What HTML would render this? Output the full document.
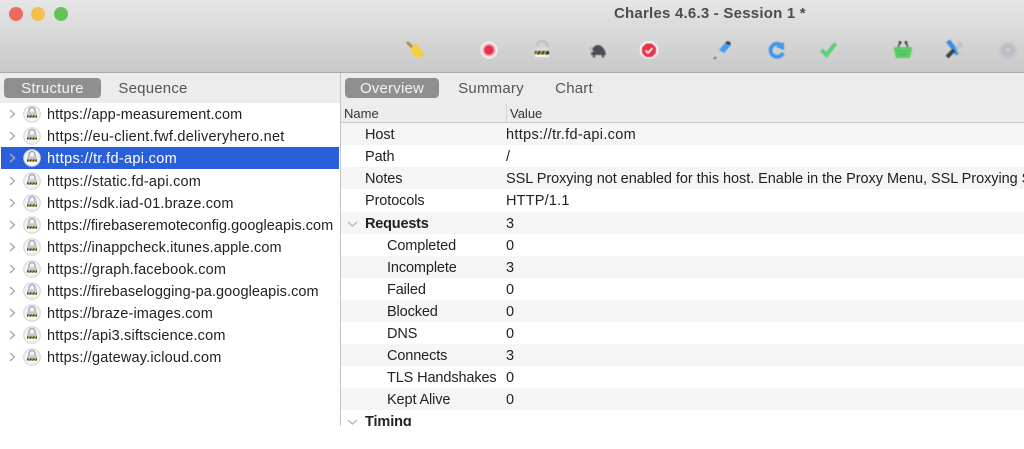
<!DOCTYPE html>
<html><head><meta charset="utf-8">
<style>
html,body{margin:0;padding:0;background:#fff}
body{width:1024px;height:449px;overflow:hidden;position:relative;font-family:"Liberation Sans",sans-serif;font-size:14.5px;color:#222}
.a{position:absolute;white-space:nowrap}
#bar{left:0;top:0;width:1024px;height:72px;background:linear-gradient(#e6e6e6,#c9c9c9)}
#sep{left:0;top:72px;width:1024px;height:1px;background:#aaa}
#tabs{left:0;top:73px;width:1024px;height:30px;background:#ececec}
.dot{width:14px;height:14px;border-radius:50%;top:7px}
.tab{height:20px;line-height:21px;top:78px;text-align:center;border-radius:4px;color:#555;font-size:15px;letter-spacing:.2px}
.tab.on{background:#8f8f8f;color:#f4f4f4}
#title{left:614px;top:5px;font-size:15px;font-weight:bold;color:#4d4d4d;letter-spacing:.22px}
.r{left:47px;height:22px;line-height:24px;color:#222}
#sel{left:1px;top:147px;width:338px;height:22px;background:#2a5fdc}
#div{left:340px;top:73px;width:1px;height:353px;background:#c4c4c4}
#right{left:341px;top:103px;width:683px;height:323px;overflow:hidden;background:#fff}
#head{left:0;top:0;width:683px;height:19px;background:#ececec;border-bottom:1px solid #c9c9c9;line-height:21px;font-size:13px;color:#333}
.row{left:0;width:683px;height:22px;line-height:24px;letter-spacing:0}
.g{background:#f5f5f5}
.row span{position:absolute;top:0}
.n{left:24px;letter-spacing:-.1px}.s{left:46px;letter-spacing:-.12px}.v{left:165px}
</style></head><body>
<div class="a" id="bar"></div><div class="a" id="sep"></div><div class="a" id="tabs"></div>
<div class="a dot" style="left:9px;background:#ec6a5f"></div>
<div class="a dot" style="left:31px;background:#f4bf4f"></div>
<div class="a dot" style="left:54px;background:#61c454"></div>
<div class="a" id="title">Charles 4.6.3 - Session 1 *</div>

<svg class="a" style="left:400px;top:35px;filter:blur(.4px)" width="624" height="30" viewBox="400 35 624 30">
<path d="M407 42l7 7" stroke="#a9853f" stroke-width="2.600"/>
<path d="M410.500 48.500l5.500-5.500 4 5.500 4.500 4.500-6 5.500-5.500-3z" fill="#f5cf3c"/>
<circle cx="489" cy="50" r="8.500" fill="#f5f0f1"/><circle cx="489" cy="50" r="6.500" fill="#f5a8b5"/><circle cx="489" cy="50" r="4.800" fill="#e92f4a"/>
<path d="M537 49v-3a5 5 0 0 1 10 0v3" fill="none" stroke="#bcc0cc" stroke-width="2.400"/>
<rect x="536" y="47" width="12" height="4" fill="#dcdce0"/>
<rect x="535" y="51" width="14" height="3.500" fill="#2b281d"/>
<path d="M536 54.500l2-3.500M540 54.500l2-3.500M544 54.500l2-3.500" stroke="#e2c33a" stroke-width="1.400"/>
<rect x="535" y="54.500" width="14" height="2.500" fill="#f7f7f7"/>
<path d="M591 55c0-7 4-10 7-10s7 3 8 10z" fill="#4b4d52"/>
<circle cx="588" cy="45.500" r="2" fill="#d8d8da"/><path d="M589 47l4 5" stroke="#bcbcc0" stroke-width="2.200"/>
<path d="M594 55v2.500M603 55v2.500" stroke="#555" stroke-width="2.400"/>
<path d="M645 41.500h8l5 5v7l-5 5h-8l-5-5v-7z" fill="#f7f7f7"/>
<path d="M646 43.500h6l4 4v5.500l-4 4h-6l-4-4v-5.500z" fill="#e8304a"/>
<path d="M645.500 50.500l2.500 2.500 4.500-5" fill="none" stroke="#fff" stroke-width="1.800"/>
<path d="M716 57l5-7" stroke="#cdd3dc" stroke-width="2.800"/>
<path d="M714 59l2-2" stroke="#555" stroke-width="1.500"/>
<path d="M719 50l7-8 5 3-7 8z" fill="#4a9bf0"/>
<path d="M725 43l3-2 3 2-1 2z" fill="#333"/>
<path d="M782 46a6.500 6.500 0 1 0 1 7" fill="none" stroke="#3f95ee" stroke-width="3.800"/>
<path d="M776 47l8-5v8z" fill="#3f95ee"/>
<path d="M821.500 50l5 5 9-11.500" fill="none" stroke="#56d072" stroke-width="4"/>
<path d="M898 47l2-4M908 47l-2-4" stroke="#555" stroke-width="1.600"/>
<circle cx="900" cy="42.500" r="1.500" fill="#444"/><circle cx="906" cy="42.500" r="1.500" fill="#444"/>
<path d="M894 47h18v3l-2 8h-14l-2-8z" fill="#5ccf68"/>
<path d="M897 51h12M898 54h10" stroke="#46b556" stroke-width="1"/>
<path d="M946 42l4-2.500 10 13-4 3z" fill="#3a8fec"/>
<path d="M962 43l-6 6" stroke="#b8bec8" stroke-width="2.600"/><path d="M960 41a3.500 3.500 0 0 0 4 6" fill="none" stroke="#c5cad2" stroke-width="2"/>
<path d="M954 50l-7 7" stroke="#3d4248" stroke-width="4"/>
<path d="M957 50l6 6.500" stroke="#c5cad2" stroke-width="2.400"/>
<circle cx="1008" cy="50" r="6.500" fill="#b9bdc6"/>
<circle cx="1008" cy="50" r="2" fill="#cdcfd4"/>
<circle cx="1008" cy="50" r="8" fill="none" stroke="#bdc0c8" stroke-width="2" stroke-dasharray="2 1.500"/>
</svg>

<div class="a tab on" style="left:4px;width:97px">Structure</div>
<div class="a tab" style="left:110px;width:86px">Sequence</div>
<div class="a tab on" style="left:345px;width:94px">Overview</div>
<div class="a tab" style="left:450px;width:82px">Summary</div>
<div class="a tab" style="left:548px;width:52px">Chart</div>

<div class="a" id="sel"></div>
<div class="a" id="div"></div>

<div class="a r" style="top:103px;letter-spacing:.1px">https://app-measurement.com</div>
<div class="a r" style="top:125px;letter-spacing:.25px">https://eu-client.fwf.deliveryhero.net</div>
<div class="a r" style="top:147px;color:#fff;letter-spacing:.32px">https://tr.fd-api.com</div>
<div class="a r" style="top:170px;letter-spacing:.2px">https://static.fd-api.com</div>
<div class="a r" style="top:192px;letter-spacing:.16px">https://sdk.iad-01.braze.com</div>
<div class="a r" style="top:214px;letter-spacing:.04px">https://firebaseremoteconfig.googleapis.com</div>
<div class="a r" style="top:236px;letter-spacing:.12px">https://inappcheck.itunes.apple.com</div>
<div class="a r" style="top:258px;letter-spacing:.16px">https://graph.facebook.com</div>
<div class="a r" style="top:280px;letter-spacing:.08px">https://firebaselogging-pa.googleapis.com</div>
<div class="a r" style="top:302px;letter-spacing:.13px">https://braze-images.com</div>
<div class="a r" style="top:324px;letter-spacing:.16px">https://api3.siftscience.com</div>
<div class="a r" style="top:346px;letter-spacing:.18px">https://gateway.icloud.com</div>

<svg class="a" style="left:0;top:103px;filter:blur(.3px)" width="46" height="266" viewBox="0 0 46 266">
<defs>
<g id="i"><path d="M10 7l4.500 4-4.500 4" fill="none" stroke="#aaa" stroke-width="1.400"/>
<circle cx="32" cy="11" r="8.300" fill="#f3f3f5" stroke="#d4d4d4" stroke-width="1"/>
<path d="M29 10v-2.500a3 3 0 0 1 6 0v2.500" fill="none" stroke="#a6aab4" stroke-width="1.500"/>
<rect x="27" y="9.500" width="10" height="3" fill="#c6c6ca"/>
<rect x="27" y="12.500" width="10" height="2.200" fill="#3b3720"/>
<path d="M28.500 14.700l1-2.200M31.500 14.700l1-2.200M34.500 14.700l1-2.200" stroke="#e0c030" stroke-width="1"/>
<rect x="27" y="14.700" width="10" height="1.300" fill="#fafafa"/></g>
</defs>
<use href="#i" y="0"/><use href="#i" y="22"/><use href="#i" y="44"/><use href="#i" y="67"/><use href="#i" y="89"/><use href="#i" y="111"/><use href="#i" y="133"/><use href="#i" y="155"/><use href="#i" y="177"/><use href="#i" y="199"/><use href="#i" y="221"/><use href="#i" y="243"/>
</svg>

<div class="a" id="right">
<div class="a" id="head"><span class="a" style="left:3px">Name</span><span class="a" style="left:165px;top:0;width:1px;height:19px;background:#d5d5d5"></span><span class="a" style="left:169px">Value</span></div>
<div class="a row g" style="top:20px"><span class="n">Host</span><span class="v" style="letter-spacing:.32px">https://tr.fd-api.com</span></div>
<div class="a row" style="top:42px"><span class="n">Path</span><span class="v">/</span></div>
<div class="a row g" style="top:64px"><span class="n">Notes</span><span class="v" style="letter-spacing:-.05px">SSL Proxying not enabled for this host. Enable in the Proxy Menu, SSL Proxying Settings.</span></div>
<div class="a row" style="top:86px"><span class="n">Protocols</span><span class="v" style="letter-spacing:.2px">HTTP/1.1</span></div>
<div class="a row g" style="top:109px"><span class="n" style="letter-spacing:-.2px"><b>Requests</b></span><span class="v">3</span></div>
<div class="a row" style="top:131px"><span class="s">Completed</span><span class="v">0</span></div>
<div class="a row g" style="top:153px"><span class="s">Incomplete</span><span class="v">3</span></div>
<div class="a row" style="top:175px"><span class="s">Failed</span><span class="v">0</span></div>
<div class="a row g" style="top:197px"><span class="s">Blocked</span><span class="v">0</span></div>
<div class="a row" style="top:219px"><span class="s">DNS</span><span class="v">0</span></div>
<div class="a row g" style="top:241px"><span class="s">Connects</span><span class="v">3</span></div>
<div class="a row" style="top:263px"><span class="s">TLS Handshakes</span><span class="v">0</span></div>
<div class="a row g" style="top:285px"><span class="s">Kept Alive</span><span class="v">0</span></div>
<div class="a row" style="top:307px"><span class="n"><b>Timing</b></span></div>
<svg class="a" style="left:5px;top:109px" width="14" height="220"><path d="M2 10l4.500 4 4.500-4M2 208l4.500 4 4.500-4" fill="none" stroke="#b5b5b5" stroke-width="1.300"/></svg>
</div>
</body></html>
